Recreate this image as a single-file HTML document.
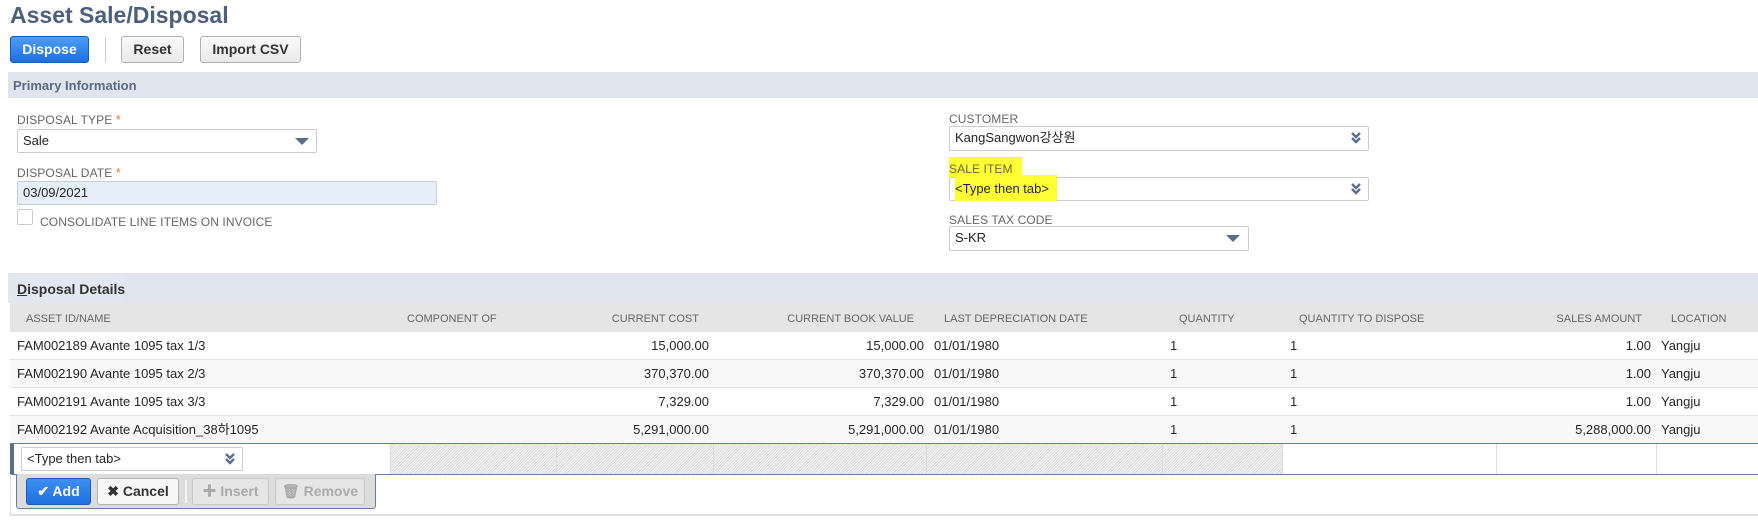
<!DOCTYPE html>
<html><head><meta charset="utf-8">
<style>
*{box-sizing:border-box;margin:0;padding:0}
body{width:1758px;height:521px;background:#fff;position:relative;overflow:hidden;font-family:"Liberation Sans","Noto Sans CJK KR",sans-serif;color:#262626;font-size:13px;line-height:16px}
.a{position:absolute;white-space:nowrap}
.btn{position:absolute;border:1px solid #b2b2b2;border-radius:3px;background:linear-gradient(#fafafa,#e9e9e9);font-weight:bold;font-size:14px;color:#333;text-align:center;line-height:25px}
.lbl{position:absolute;font-size:12px;color:#666;letter-spacing:.1px;white-space:nowrap}
.star{color:#e0832c;font-size:13px}
.inp{position:absolute;border:1px solid #ccc;border-radius:2px;background:#fff;font-size:13px;line-height:22px;padding-left:5px;white-space:nowrap}
.tri{position:absolute;width:0;height:0;border-left:7px solid transparent;border-right:7px solid transparent;border-top:7px solid #5a6d8a}
.dbl{position:absolute;width:12px;height:12px}
.hd{position:absolute;font-size:11px;color:#666;top:313px;line-height:13px}
.cell{position:absolute;font-size:13px;line-height:16px;height:16px;white-space:nowrap}
.rowbg{position:absolute;left:10px;width:1748px;height:28px;border-bottom:1px solid #e3e3e3}
.hatch{position:absolute;top:444px;height:30px;background:repeating-linear-gradient(135deg,#f3f3f3 0 1px,#dcdcdc 1px 2px);border-right:1px solid #ddd}
</style></head><body>

<div class="a" style="left:10px;top:2px;font-size:23px;line-height:26px;font-weight:bold;color:#4d5f79">Asset Sale/Disposal</div>

<div class="btn" style="left:10px;top:36px;width:79px;height:27px;background:linear-gradient(#4d9df5,#1d6fe0);border-color:#1a5cb8;color:#fff">Dispose</div>
<div class="a" style="left:105px;top:37px;width:1px;height:25px;background:#ccc"></div>
<div class="btn" style="left:121px;top:36px;width:63px;height:27px">Reset</div>
<div class="btn" style="left:200px;top:36px;width:101px;height:27px">Import CSV</div>

<div class="a" style="left:8px;top:72px;width:1750px;height:26px;background:#dfe4ee"></div>
<div class="a" style="left:13px;top:78px;font-size:13px;font-weight:bold;color:#5b6b84">Primary Information</div>

<div class="lbl" style="left:17px;top:112px">DISPOSAL TYPE <span class="star">*</span></div>
<div class="inp" style="left:17px;top:129px;width:300px;height:24px">Sale</div>
<div class="tri" style="left:295px;top:138px"></div>

<div class="lbl" style="left:17px;top:165px">DISPOSAL DATE <span class="star">*</span></div>
<div class="inp" style="left:17px;top:181px;width:420px;height:24px;background:#e6eefa;border-color:#c4cdda">03/09/2021</div>

<div class="a" style="left:17px;top:209px;width:16px;height:16px;border:1px solid #ccc;border-radius:2px"></div>
<div class="lbl" style="left:40px;top:214px">CONSOLIDATE LINE ITEMS ON INVOICE</div>

<div class="lbl" style="left:949px;top:111px">CUSTOMER</div>
<div class="inp" style="left:949px;top:126px;width:420px;height:25px">KangSangwon강상원</div>
<svg class="dbl" style="left:1350px;top:132px" viewBox="0 0 12 12"><path d="M2 1l4 4 4-4M2 6l4 4 4-4" fill="none" stroke="#5a6d8a" stroke-width="2.4"/></svg>

<div class="a" style="left:949px;top:157px;width:73px;height:20px;background:#ffff33"></div>
<div class="lbl" style="left:949px;top:161px;color:#6a6a30">SALE ITEM</div>
<div class="inp" style="left:949px;top:177px;width:420px;height:24px"></div>
<div class="a" style="left:955px;top:175px;width:102px;height:26px;background:#ffff33"></div>
<div class="a" style="left:955px;top:181px;font-size:13px">&lt;Type then tab&gt;</div>
<svg class="dbl" style="left:1350px;top:183px" viewBox="0 0 12 12"><path d="M2 1l4 4 4-4M2 6l4 4 4-4" fill="none" stroke="#5a6d8a" stroke-width="2.4"/></svg>

<div class="lbl" style="left:949px;top:212px">SALES TAX CODE</div>
<div class="inp" style="left:949px;top:226px;width:300px;height:25px">S-KR</div>
<div class="tri" style="left:1226px;top:235px"></div>

<div class="a" style="left:8px;top:273px;width:1750px;height:30px;background:#dfe4ee"></div>
<div class="a" style="left:8px;top:273px;width:116px;height:30px;background:#e3e7ef"></div>
<div class="a" style="left:17px;top:281px;font-size:14px;font-weight:bold;color:#333"><u>D</u>isposal Details</div>

<div class="a" style="left:10px;top:303px;width:1748px;height:29px;background:#e5e5e5"></div>
<div class="hd" style="left:26px">ASSET ID/NAME</div>
<div class="hd" style="left:407px">COMPONENT OF</div>
<div class="hd" style="left:557px;width:142px;text-align:right">CURRENT COST</div>
<div class="hd" style="left:714px;width:200px;text-align:right">CURRENT BOOK VALUE</div>
<div class="hd" style="left:944px">LAST DEPRECIATION DATE</div>
<div class="hd" style="left:1179px">QUANTITY</div>
<div class="hd" style="left:1299px">QUANTITY TO DISPOSE</div>
<div class="hd" style="left:1497px;width:145px;text-align:right">SALES AMOUNT</div>
<div class="hd" style="left:1671px">LOCATION</div>

<div class="rowbg" style="top:332px;background:#fff"></div>
<div class="rowbg" style="top:360px;background:#f8f8f8"></div>
<div class="rowbg" style="top:388px;background:#fff"></div>
<div class="rowbg" style="top:416px;background:#f8f8f8"></div>

<div class="cell" style="left:17px;top:338px">FAM002189 Avante 1095 tax 1/3</div>
<div class="cell" style="left:17px;top:366px">FAM002190 Avante 1095 tax 2/3</div>
<div class="cell" style="left:17px;top:394px">FAM002191 Avante 1095 tax 3/3</div>
<div class="cell" style="left:17px;top:422px">FAM002192 Avante Acquisition_38하1095</div>

<div class="cell" style="left:557px;width:152px;text-align:right;top:338px">15,000.00</div>
<div class="cell" style="left:557px;width:152px;text-align:right;top:366px">370,370.00</div>
<div class="cell" style="left:557px;width:152px;text-align:right;top:394px">7,329.00</div>
<div class="cell" style="left:557px;width:152px;text-align:right;top:422px">5,291,000.00</div>

<div class="cell" style="left:714px;width:210px;text-align:right;top:338px">15,000.00</div>
<div class="cell" style="left:714px;width:210px;text-align:right;top:366px">370,370.00</div>
<div class="cell" style="left:714px;width:210px;text-align:right;top:394px">7,329.00</div>
<div class="cell" style="left:714px;width:210px;text-align:right;top:422px">5,291,000.00</div>

<div class="cell" style="left:934px;top:338px">01/01/1980</div>
<div class="cell" style="left:934px;top:366px">01/01/1980</div>
<div class="cell" style="left:934px;top:394px">01/01/1980</div>
<div class="cell" style="left:934px;top:422px">01/01/1980</div>

<div class="cell" style="left:1170px;top:338px">1</div><div class="cell" style="left:1290px;top:338px">1</div>
<div class="cell" style="left:1170px;top:366px">1</div><div class="cell" style="left:1290px;top:366px">1</div>
<div class="cell" style="left:1170px;top:394px">1</div><div class="cell" style="left:1290px;top:394px">1</div>
<div class="cell" style="left:1170px;top:422px">1</div><div class="cell" style="left:1290px;top:422px">1</div>

<div class="cell" style="left:1497px;width:154px;text-align:right;top:338px">1.00</div>
<div class="cell" style="left:1497px;width:154px;text-align:right;top:366px">1.00</div>
<div class="cell" style="left:1497px;width:154px;text-align:right;top:394px">1.00</div>
<div class="cell" style="left:1497px;width:154px;text-align:right;top:422px">5,288,000.00</div>
<div class="cell" style="left:1661px;top:338px">Yangju</div>
<div class="cell" style="left:1661px;top:366px">Yangju</div>
<div class="cell" style="left:1661px;top:394px">Yangju</div>
<div class="cell" style="left:1661px;top:422px">Yangju</div>

<!-- edit row -->
<div class="a" style="left:10px;top:443px;width:1748px;height:32px;border-top:1px solid #6a7fa0;border-bottom:1px solid #6a7fa0"></div>
<div class="a" style="left:10px;top:444px;width:4px;height:30px;background:#5a6d8a"></div>
<div class="hatch" style="left:390px;width:167px;border-left:1px solid #ddd"></div>
<div class="hatch" style="left:557px;width:157px"></div>
<div class="hatch" style="left:714px;width:213px"></div>
<div class="hatch" style="left:927px;width:236px"></div>
<div class="hatch" style="left:1163px;width:120px"></div>
<div class="a" style="left:1283px;top:444px;width:214px;height:30px;border-right:1px solid #ddd"></div>
<div class="a" style="left:1497px;top:444px;width:160px;height:30px;border-right:1px solid #ddd"></div>
<div class="inp" style="left:21px;top:447px;width:222px;height:24px">&lt;Type then tab&gt;</div>
<svg class="dbl" style="left:224px;top:453px" viewBox="0 0 12 12"><path d="M2 1l4 4 4-4M2 6l4 4 4-4" fill="none" stroke="#5a6d8a" stroke-width="2.4"/></svg>

<div class="a" style="left:10px;top:474px;width:1748px;height:42px;border-bottom:2px solid #e0e0e0;border-left:1px solid #e0e0e0"></div>
<div class="a" style="left:16px;top:474px;width:360px;height:35px;background:#dcdcdc;border:1px solid #6a7fa0;border-top:none;border-radius:0 0 3px 3px"></div>
<div class="btn" style="left:26px;top:478px;width:65px;height:27px;background:linear-gradient(#3d8ff0,#1f70e0);border-color:#1a5cb8;color:#fff;font-size:14px">✔ Add</div>
<div class="btn" style="left:97px;top:478px;width:82px;height:27px;background:#f7f7f7">✖ Cancel</div>
<div class="a" style="left:185px;top:480px;width:2px;height:23px;background:#f5f5f5"></div>
<div class="btn" style="left:192px;top:478px;width:77px;height:27px;background:#e6e6e6;color:#aaa;border-color:#c8c8c8">✚ Insert</div>
<div class="btn" style="left:275px;top:478px;width:90px;height:27px;background:#e6e6e6;color:#aaa;border-color:#c8c8c8">🗑 Remove</div>
</body></html>
